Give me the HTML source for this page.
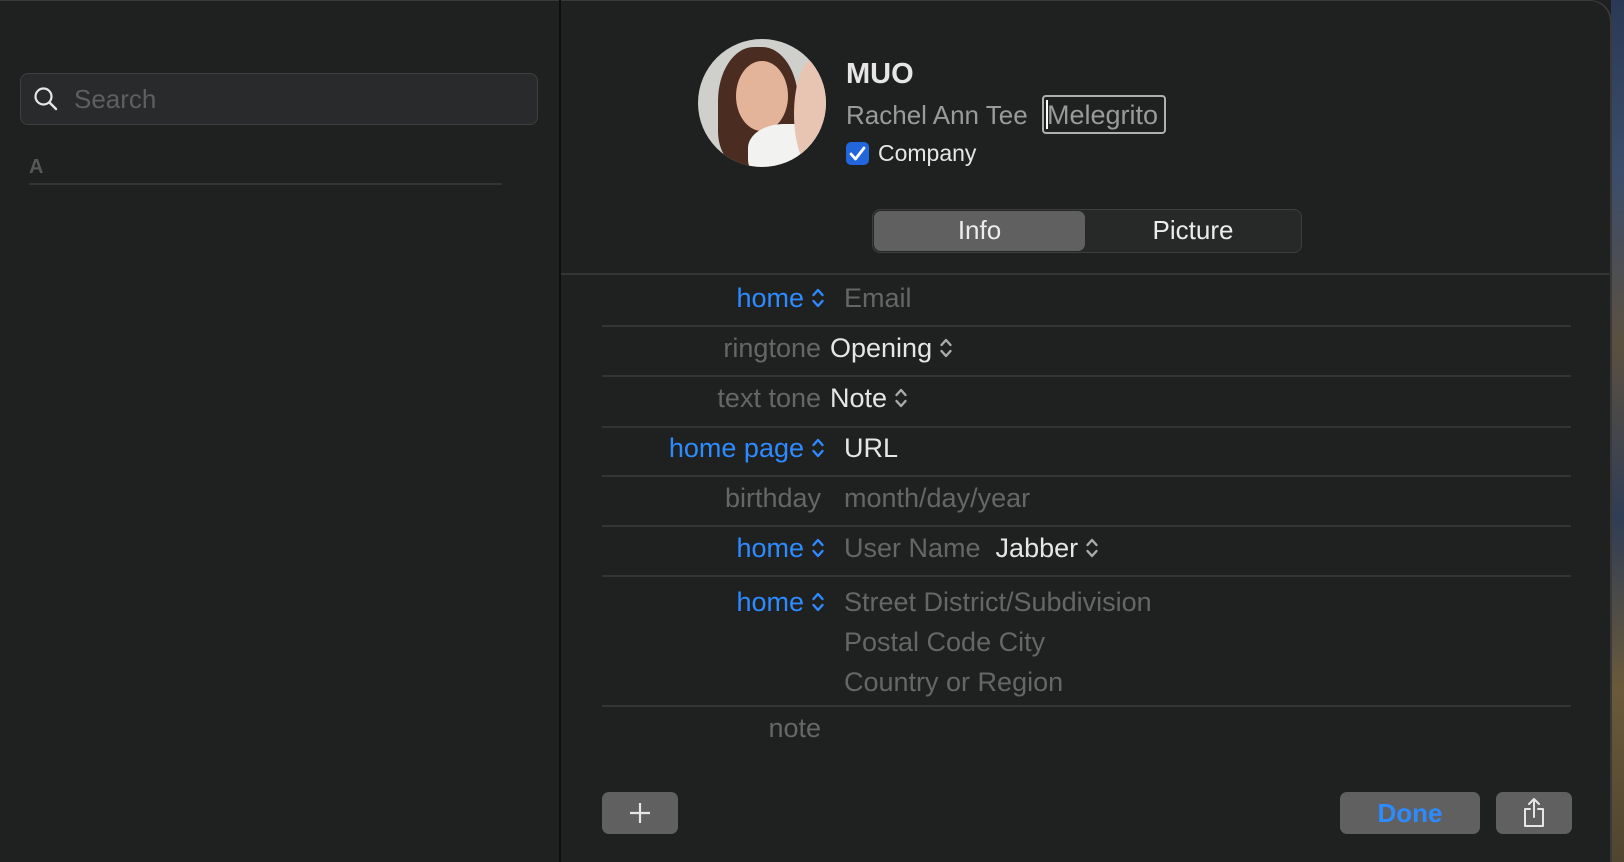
<!DOCTYPE html>
<html><head><meta charset="utf-8"><style>
*{margin:0;padding:0;box-sizing:border-box}
body{width:1624px;height:862px;overflow:hidden;background:#1f2020;font-family:"Liberation Sans",sans-serif;position:relative}
.a{position:absolute;white-space:nowrap}
.desk{position:absolute;left:1611px;top:0;width:13px;height:862px;background:linear-gradient(180deg,#2a3a55 0%,#3b4d6a 20%,#5b5040 40%,#2f3d55 60%,#6a5a3a 80%,#504530 100%)}
.win{position:absolute;left:0;top:0;width:1612px;height:862px;background:#1f2020;border-right:2px solid #3a3a3a;border-top-right-radius:22px;border-top:1px solid #3a3a3a}
.lbl{position:absolute;right:799px;font-size:27px;color:#666;text-align:right;line-height:30px;white-space:nowrap}
.lb2{right:803px}
.blue{color:#2e8bff}
.val{position:absolute;left:844px;font-size:27px;color:#666;line-height:30px;white-space:nowrap}
.v2{left:830px}
.w{color:#e6e6e6}
.line{position:absolute;left:602px;width:969px;height:2px;background:#333535}
.chev{display:inline-block;vertical-align:middle;margin-left:7px;margin-top:-4px}
</style></head><body>
<div class="desk"></div>
<div class="win"></div>
<div class="a" style="left:559px;top:0;width:2px;height:862px;background:#0e0e0e"></div>
<svg width="0" height="0" style="position:absolute"><defs><symbol id="ch" viewBox="0 0 14 22"><path d="M2.5 8l4.5-5 4.5 5M2.5 14l4.5 5 4.5-5" fill="none" stroke="currentColor" stroke-width="2.4" stroke-linecap="round" stroke-linejoin="round"/></symbol></defs></svg>
<!-- search -->
<div class="a" style="left:20px;top:73px;width:518px;height:52px;border:1px solid #3e4040;border-radius:8px;background:#282a2b"></div>
<svg class="a" style="left:33px;top:86px" width="26" height="26" viewBox="0 0 26 26"><circle cx="10.5" cy="10.5" r="8" fill="none" stroke="#e6e6e6" stroke-width="2.2"/><path d="M16.5 16.5L23 23" stroke="#e6e6e6" stroke-width="2.4" stroke-linecap="round"/></svg>
<div class="a" style="left:74px;top:84px;font-size:26px;color:#5d5f60">Search</div>
<div class="a" style="left:29px;top:156px;font-size:20px;font-weight:bold;color:#565858">A</div>
<div class="a" style="left:29px;top:183px;width:473px;height:2px;background:#333535"></div>
<!-- avatar -->
<div class="a" style="left:698px;top:39px;width:128px;height:128px;border-radius:50%;overflow:hidden;background:#cfd0cc">
<div class="a" style="left:20px;top:8px;width:80px;height:120px;background:#4a2c20;border-radius:45% 45% 30% 30%"></div>
<div class="a" style="left:38px;top:22px;width:52px;height:70px;background:#e3b39a;border-radius:50%"></div>
<div class="a" style="left:50px;top:85px;width:90px;height:60px;background:#f2f2f0;border-radius:40%"></div>
<div class="a" style="left:96px;top:20px;width:40px;height:110px;background:#e8c4b2;border-radius:50%"></div>
</div>
<div class="a" style="left:846px;top:58px;font-size:29px;font-weight:bold;color:#e6e6e6">MUO</div>
<div class="a" style="left:846px;top:100px;font-size:26px;color:#9a9a9a">Rachel Ann Tee</div>
<div class="a" style="left:1042px;top:95px;width:124px;height:39px;border:2px solid #b0b0b0;border-radius:4px"></div>
<div class="a" style="left:1046px;top:100px;width:2px;height:29px;background:#fff"></div>
<div class="a" style="left:1047px;top:100px;font-size:27px;color:#9a9a9a">Melegrito</div>
<div class="a" style="left:846px;top:142px;width:23px;height:23px;border-radius:5px;background:#2266dd"></div>
<svg class="a" style="left:846px;top:142px" width="23" height="23"><path d="M5 12l4.5 5L18 6" fill="none" stroke="#fff" stroke-width="2.8" stroke-linecap="round" stroke-linejoin="round"/></svg>
<div class="a" style="left:878px;top:140px;font-size:23px;color:#e6e6e6">Company</div>
<!-- segmented -->
<div class="a" style="left:872px;top:209px;width:430px;height:44px;border:1px solid #3c3e3e;border-radius:8px;background:#272929"></div>
<div class="a" style="left:874px;top:211px;width:211px;height:40px;border-radius:7px;background:#5f605f"></div>
<div class="a" style="left:874px;top:215px;width:211px;text-align:center;font-size:26px;color:#ececec">Info</div>
<div class="a" style="left:1085px;top:215px;width:216px;text-align:center;font-size:26px;color:#ececec">Picture</div>
<div class="a" style="left:561px;top:273px;width:1050px;height:2px;background:#333535"></div>
<!-- rows -->
<div class="lbl blue" style="top:283px">home<svg class="chev" width="14" height="22"><use href="#ch"/></svg></div>
<div class="val" style="top:283px">Email</div>
<div class="line" style="top:325px"></div>
<div class="lbl lb2" style="top:333px">ringtone</div>
<div class="val v2 w" style="top:333px">Opening<svg class="chev" width="14" height="22" style="color:#aaa"><use href="#ch"/></svg></div>
<div class="line" style="top:375px"></div>
<div class="lbl lb2" style="top:383px">text tone</div>
<div class="val v2 w" style="top:383px">Note<svg class="chev" width="14" height="22" style="color:#aaa"><use href="#ch"/></svg></div>
<div class="line" style="top:426px"></div>
<div class="lbl blue" style="top:433px">home page<svg class="chev" width="14" height="22"><use href="#ch"/></svg></div>
<div class="val w" style="top:433px">URL</div>
<div class="line" style="top:475px"></div>
<div class="lbl lb2" style="top:483px">birthday</div>
<div class="val" style="top:483px">month/day/year</div>
<div class="line" style="top:525px"></div>
<div class="lbl blue" style="top:533px">home<svg class="chev" width="14" height="22"><use href="#ch"/></svg></div>
<div class="val" style="top:533px">User Name &nbsp;<span class="w">Jabber</span><svg class="chev" width="14" height="22" style="color:#aaa"><use href="#ch"/></svg></div>
<div class="line" style="top:575px"></div>
<div class="lbl blue" style="top:587px">home<svg class="chev" width="14" height="22"><use href="#ch"/></svg></div>
<div class="val" style="top:587px">Street District/Subdivision</div>
<div class="val" style="top:627px">Postal Code City</div>
<div class="val" style="top:667px">Country or Region</div>
<div class="line" style="top:705px"></div>
<div class="lbl lb2" style="top:713px">note</div>
<!-- buttons -->
<div class="a" style="left:602px;top:792px;width:76px;height:42px;border-radius:7px;background:#5f605f"></div>
<svg class="a" style="left:628px;top:801px" width="24" height="24"><path d="M12 2v20M2 12h20" stroke="#e6e6e6" stroke-width="2.2"/></svg>
<div class="a" style="left:1340px;top:792px;width:140px;height:42px;border-radius:7px;background:#5f605f;text-align:center;font-size:26px;font-weight:bold;color:#2e8bff;line-height:42px">Done</div>
<div class="a" style="left:1496px;top:792px;width:76px;height:42px;border-radius:7px;background:#5f605f"></div>
<svg class="a" style="left:1521px;top:797px" width="26" height="32" viewBox="0 0 26 32"><path d="M9 12H4v17h18V12h-5M13 2v18M8 7l5-5 5 5" fill="none" stroke="#e6e6e6" stroke-width="2" stroke-linecap="round" stroke-linejoin="round"/></svg>
</body></html>
